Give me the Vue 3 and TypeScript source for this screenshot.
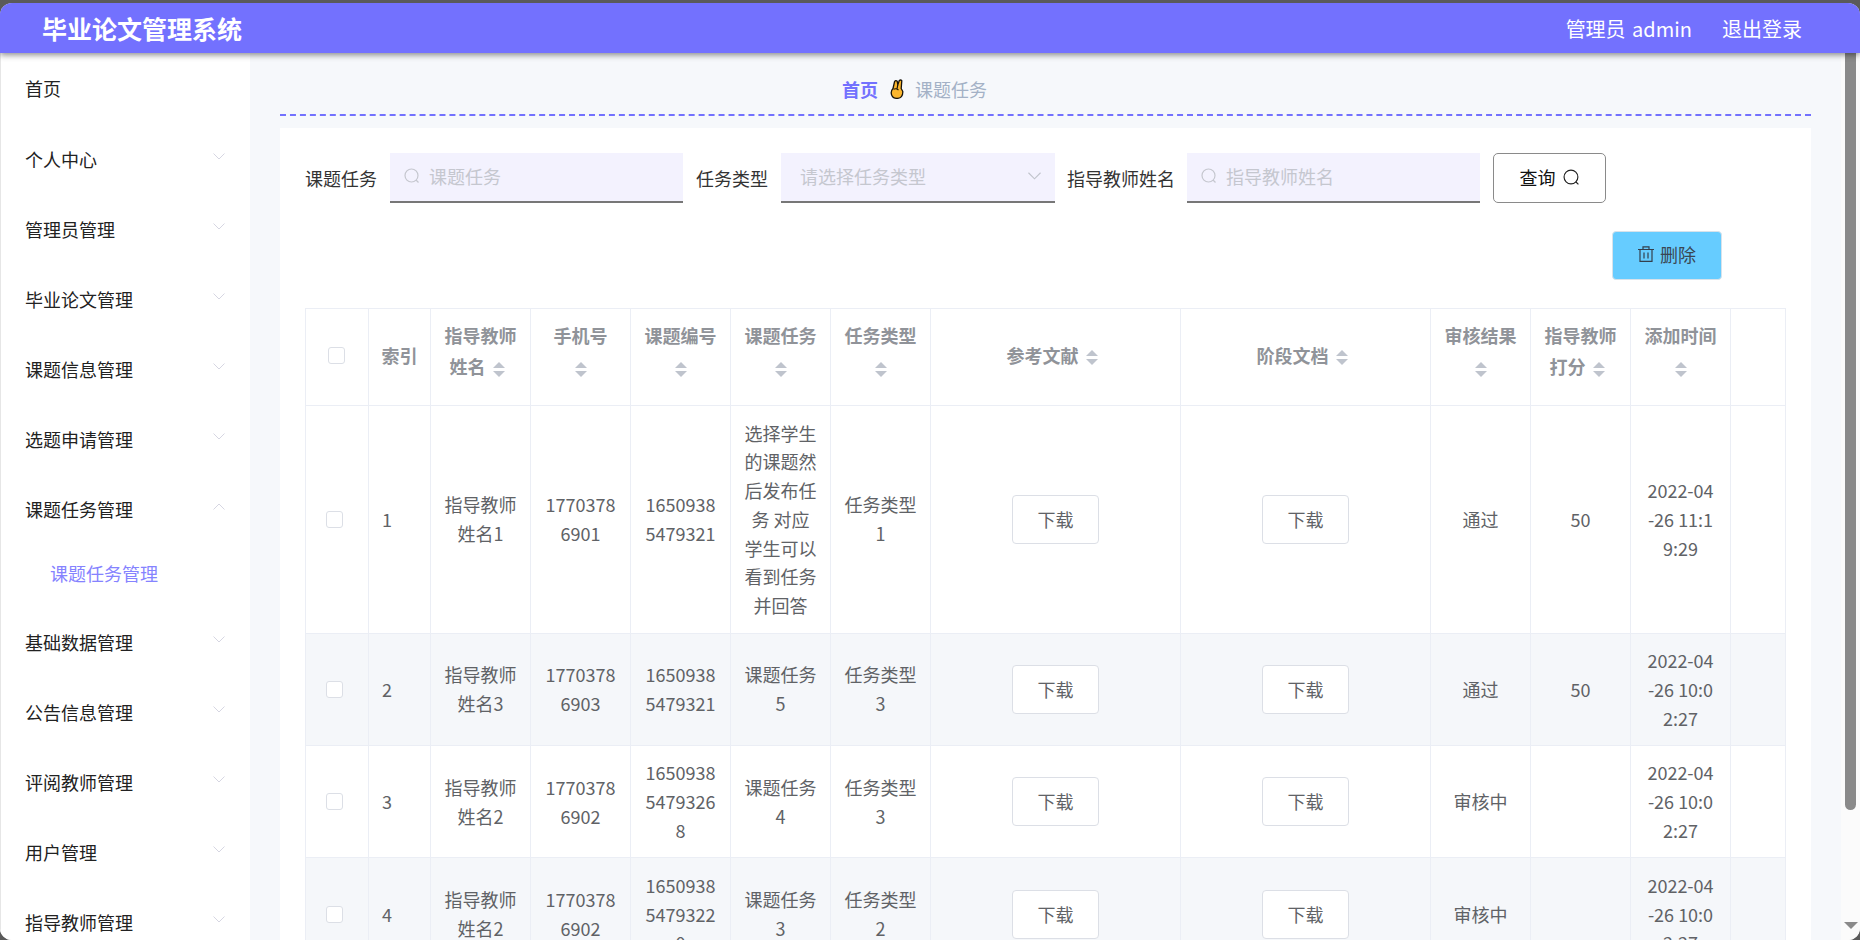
<script setup lang="ts">
interface MenuItem { label: string; arrow?: 'down' | 'up'; children?: string[] }
interface Row {
  idx: number; teacher: string; phone: string; code: string; task: string;
  type: string; result: string; score: string; time: string;
}
const menu: MenuItem[] = [
  { label: '首页' },
  { label: '个人中心', arrow: 'down' },
  { label: '管理员管理', arrow: 'down' },
  { label: '毕业论文管理', arrow: 'down' },
  { label: '课题信息管理', arrow: 'down' },
  { label: '选题申请管理', arrow: 'down' },
  { label: '课题任务管理', arrow: 'up', children: ['课题任务管理'] },
  { label: '基础数据管理', arrow: 'down' },
  { label: '公告信息管理', arrow: 'down' },
  { label: '评阅教师管理', arrow: 'down' },
  { label: '用户管理', arrow: 'down' },
  { label: '指导教师管理', arrow: 'down' },
]
const heads = [
  { text: '指导教师姓名' }, { text: '手机号' }, { text: '课题编号' }, { text: '课题任务' },
  { text: '任务类型' }, { text: '参考文献', solo: true }, { text: '阶段文档', solo: true }, { text: '审核结果' },
  { text: '指导教师打分' }, { text: '添加时间' },
]
const widths = [63, 62, 100, 100, 100, 100, 100, 250, 250, 100, 100, 100, 55]
const rows: Row[] = [
  { idx: 1, teacher: '指导教师姓名1', phone: '17703786901', code: '16509385479321', task: '选择学生的课题然后发布任务 对应学生可以看到任务并回答', type: '任务类型1', result: '通过', score: '50', time: '2022-04-26 11:19:29' },
  { idx: 2, teacher: '指导教师姓名3', phone: '17703786903', code: '16509385479321', task: '课题任务5', type: '任务类型3', result: '通过', score: '50', time: '2022-04-26 10:02:27' },
  { idx: 3, teacher: '指导教师姓名2', phone: '17703786902', code: '165093854793268', task: '课题任务4', type: '任务类型3', result: '审核中', score: '', time: '2022-04-26 10:02:27' },
  { idx: 4, teacher: '指导教师姓名2', phone: '17703786902', code: '165093854793220', task: '课题任务3', type: '任务类型2', result: '审核中', score: '', time: '2022-04-26 10:02:27' },
]
</script>

<template>
  <div class="app">
    <header class="topbar">
      <h1 class="title">毕业论文管理系统</h1>
      <div class="account">
        <span class="who">管理员 admin</span>
        <span>退出登录</span>
      </div>
    </header>
    <div class="body-row">
      <aside class="sidebar">
        <template v-for="item in menu" :key="item.label">
          <div class="menu-item">
            <span>{{ item.label }}</span>
            <svg v-if="item.arrow" class="chev" :class="{ up: item.arrow === 'up' }" viewBox="0 0 12 7" width="12" height="7">
              <path d="M.5.5 6 6 11.500.5" fill="none" stroke="#d6d6e2" stroke-width="1" />
            </svg>
          </div>
          <div v-for="c in item.children" :key="c" class="sub-item">{{ c }}</div>
        </template>
      </aside>
      <main class="main">
        <nav class="crumb">
          <b class="crumb-home">首页</b>
          <svg class="hand" viewBox="0 0 14 20" width="14" height="20">
            <path d="M3 9.500 4.600 2.500Q5.800.8 7.200 2.200L7.800 5.800 9.300 1.500Q10.700.4 11.800 1.700L11.200 9.500 12.800 12.500Q13 19.300 7 19.400 1.500 19.300 1.200 14 1.100 11.500 3 9.500Z" fill="#fbb62d" stroke="#17130a" stroke-width="1.300" stroke-linejoin="round" />
            <path d="M3.500 10.200Q6 9 8.500 11M7.800 5.800 7 10" fill="none" stroke="#17130a" stroke-width="1.200" />
          </svg>
          <span class="crumb-cur">课题任务</span>
        </nav>
        <section class="card">
          <div class="filters">
            <label class="f-label">课题任务</label>
            <div class="field w293">
              <svg class="search" viewBox="0 0 16 16" width="16" height="16"><circle cx="7.500" cy="7.500" r="6.500" fill="none" stroke="#c5c7cf" stroke-width="1.200" /><path d="M12 12l2.500 2.500" stroke="#c5c7cf" stroke-width="1.200" /></svg>
              <span>课题任务</span>
            </div>
            <label class="f-label l2">任务类型</label>
            <div class="field select">
              <span>请选择任务类型</span>
              <svg viewBox="0 0 14 8" width="13" height="8"><path d="M.5.5 7 7 13.500.5" fill="none" stroke="#c0c4cc" stroke-width="1.200" /></svg>
            </div>
            <label class="f-label l3">指导教师姓名</label>
            <div class="field w293 last">
              <svg class="search" viewBox="0 0 16 16" width="16" height="16"><circle cx="7.500" cy="7.500" r="6.500" fill="none" stroke="#c5c7cf" stroke-width="1.200" /><path d="M12 12l2.500 2.500" stroke="#c5c7cf" stroke-width="1.200" /></svg>
              <span>指导教师姓名</span>
            </div>
            <button class="query" type="button">
              查询
              <svg viewBox="0 0 16 16" width="17" height="17"><circle cx="7.500" cy="7.500" r="6.500" fill="none" stroke="#222" stroke-width="1.100" /><path d="M12 12l2.500 2.500" stroke="#222" stroke-width="1.100" /></svg>
            </button>
          </div>
          <div class="actions">
            <button class="del" type="button">
              <svg viewBox="0 0 16 16" width="16" height="16" fill="none" stroke="#333f4d" stroke-width="1.200"><path d="M0 3.500h16M5 3.500V.8h6v2.700M2 3.500v11.900h12V3.500M6 6.500v6M10 6.500v6" /></svg>
              <span>删除</span>
            </button>
          </div>
          <table class="grid">
            <colgroup><col v-for="(w, i) in widths" :key="i" :style="{ width: w + 'px' }" /></colgroup>
            <thead>
              <tr>
                <th class="check-h solo"><i class="cb" /></th>
                <th class="solo tight">索引</th>
                <th v-for="h in heads" :key="h.text" :class="{ solo: h.solo }">
                  {{ h.text }}<span class="caret"><i class="c-up" /><i class="c-down" /></span>
                </th>
                <th class="solo" />
              </tr>
            </thead>
            <tbody>
              <tr v-for="r in rows" :key="r.idx" :class="{ alt: r.idx % 2 === 0 }">
                <td class="check-d"><i class="cb" /></td>
                <td class="idx">{{ r.idx }}</td>
                <td>{{ r.teacher }}</td>
                <td>{{ r.phone }}</td>
                <td>{{ r.code }}</td>
                <td>{{ r.task }}</td>
                <td>{{ r.type }}</td>
                <td><button class="dl" type="button">下载</button></td>
                <td><button class="dl" type="button">下载</button></td>
                <td>{{ r.result }}</td>
                <td>{{ r.score }}</td>
                <td>{{ r.time }}</td>
                <td />
              </tr>
            </tbody>
          </table>
        </section>
      </main>
      <div class="scroll">
        <div class="thumb" />
        <div class="arrow" />
      </div>
    </div>
  </div>
</template>

<style scoped>
.app {
  margin-top: 3px;
  height: 937px;
  width: 1860px;
  border-radius: 12px;
  overflow: hidden;
  display: flex;
  flex-direction: column;
  background: #fff;
  font-family: "Noto Sans CJK SC", "Noto Sans", sans-serif;
  font-size: 18px;
  color: #303133;
}
.topbar {
  position: relative;
  z-index: 2;
  flex: 0 0 50px;
  background: #7371fe;
  box-shadow: 0 2px 6px rgba(0, 0, 0, .45);
  color: #fff;
  display: flex;
  align-items: center;
  justify-content: space-between;
  padding: 0 58px 0 42px;
}
.title { margin: 0; font-size: 25px; font-weight: 700; line-height: 50px; }
.account { display: flex; gap: 30px; font-size: 20px; }
.who { word-spacing: 2px; }
.body-row { flex: 1; display: flex; min-height: 0; }
.sidebar {
  flex: 0 0 250px;
  box-sizing: border-box;
  border-left: 1px solid #e6e6e6;
  background: #fff;
  padding-top: 1px;
  overflow: hidden;
  color: #222;
}
.menu-item {
  height: 70px;
  display: flex;
  align-items: center;
  justify-content: space-between;
  padding: 0 25px 0 24px;
}
.menu-item:first-child span { margin-bottom: 2px; }
.chev { margin-bottom: 5px; }
.chev.up { transform: rotate(180deg); }
.sub-item {
  height: 59px;
  line-height: 59px;
  padding: 0 0 4px 49px;
  color: #8583ff;
}
.main {
  flex: 1;
  min-width: 0;
  background: #f6f8fb;
  padding: 0 30px;
  overflow: hidden;
}
.crumb {
  height: 51px;
  padding-top: 10px;
  padding-left: 562px;
  border-bottom: 2px dashed #7371fe;
  display: flex;
  align-items: center;
  margin-bottom: 12px;
}
.crumb-home { color: #7371fe; font-weight: 700; }
.hand { margin: 0 11px 0 12px; }
.crumb-cur { color: #a3b1c6; }
.card { background: #fff; padding: 25px 26px 0 25px; }
.filters { display: flex; align-items: stretch; height: 50px; }
.f-label { width: 85px; line-height: 50px; color: #333; white-space: nowrap; flex: none; }
.f-label.l2 { width: auto; margin: 0 13px; }
.f-label.l3 { width: auto; margin: 0 12px; }
.field {
  box-sizing: border-box;
  background: #f3f2fe;
  border-bottom: 2px solid #777;
  display: flex;
  align-items: center;
  color: #c5c7cf;
  flex: none;
  padding-bottom: 3px;
}
.w293 { width: 293px; padding-left: 14px; gap: 9px; }
.select { width: 274px; padding: 0 14px 3px 19px; justify-content: space-between; }
.last { margin-right: 13px; }
.query {
  width: 113px;
  box-sizing: border-box;
  background: #fff;
  border: 1px solid #8a8a8a;
  border-radius: 5px;
  font: inherit;
  color: #111;
  display: flex;
  align-items: center;
  justify-content: center;
  gap: 7px;
  padding: 0 0 2px;
}
.actions { display: flex; justify-content: flex-end; padding: 28px 63px 28px 0; height: 49px; }
.del {
  width: 110px;
  height: 49px;
  box-sizing: border-box;
  background: #66ccff;
  border: 1px solid #d8e2ea;
  border-radius: 4px;
  font: inherit;
  color: #3a4653;
  display: flex;
  align-items: center;
  justify-content: center;
  gap: 6px;
  padding: 0 0 3px;
}
.grid {
  table-layout: fixed;
  width: 1480px;
  border-collapse: collapse;
  font-size: 18px;
  color: #606266;
}
.grid th, .grid td {
  border: 1px solid #ebeef5;
  text-align: center;
  vertical-align: middle;
  word-break: break-all;
}
.grid th {
  padding: 11px 13.45px 23px;
  line-height: 31px;
  font-weight: 700;
  color: #909399;
}
.grid th.solo { padding-top: 14px; padding-bottom: 18px; }
.grid th.tight { padding-left: 0; padding-right: 0; }
.grid td { padding: 12.500px 13.45px; line-height: 28.800px; }
.alt td { background: #f5f7fa; }
.grid .check-h { text-align: left; padding-left: 22px; padding-right: 0; }
.grid .check-d { text-align: left; padding-left: 20px; padding-right: 0; }
.grid .idx { text-align: left; padding-left: 13px; }
.cb {
  display: block;
  width: 17px;
  height: 17px;
  box-sizing: border-box;
  border: 1px solid #dcdfe6;
  border-radius: 3px;
  background: #fff;
}
.caret {
  display: inline-flex;
  flex-direction: column;
  gap: 3px;
  margin: 0 7px;
  vertical-align: middle;
}
.c-up, .c-down { width: 0; height: 0; border-left: 6px solid transparent; border-right: 6px solid transparent; }
.c-up { border-bottom: 6px solid #bfc4cd; }
.c-down { border-top: 6px solid #bfc4cd; }
.dl {
  width: 87px;
  height: 49px;
  box-sizing: border-box;
  background: #fff;
  border: 1px solid #dcdfe6;
  border-radius: 4px;
  font: inherit;
  color: #606266;
  padding: 0;
  display: block;
  margin: 0 auto;
}
.scroll {
  flex: 0 0 19px;
  background: #fbfbfb;
  position: relative;
  box-sizing: border-box;
  padding-left: 4px;
}
.thumb {
  width: 11px;
  height: 757px;
  background: #8a8a8a;
  border-radius: 0 0 6px 6px;
}
.arrow {
  position: absolute;
  left: 3px;
  top: 869px;
  width: 0;
  height: 0;
  border-left: 7px solid transparent;
  border-right: 7px solid transparent;
  border-top: 7px solid #8a8a8a;
}
</style>

<style>
html, body { margin: 0; height: 100%; overflow: hidden; background: #5a5a5a; }
</style>
